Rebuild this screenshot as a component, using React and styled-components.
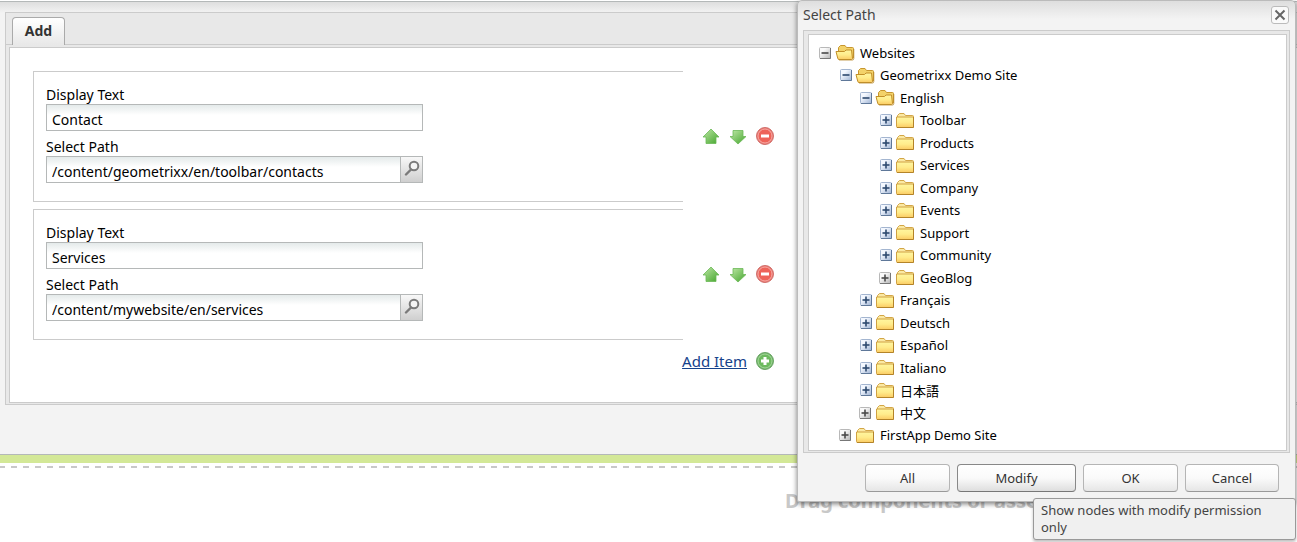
import React, { useState } from "react";
import styled, { createGlobalStyle } from "styled-components";

const GlobalStyle = createGlobalStyle`
    * {
        box-sizing: border-box;
    }

    body {
        margin: 0;
        background: #fff;
        color: #000;
        font-family: "Noto Sans", "Noto Sans CJK JP", sans-serif;
        font-size: 14px;
        overflow: hidden;
    }

    button,
    input {
        font: inherit;
        color: inherit;
    }
`;

const Page = styled.div`
    position: relative;
    min-height: 100vh;
    overflow: hidden;
`;

const EditDialog = styled.section`
    margin-top: 1px;
    padding: 10px 0 49px 5px;
    border-top: 1px solid #b4b8b8;
    border-bottom: 1px solid #b4b8b8;
    background: linear-gradient(#dedede, #f3f3f3 11px);
`;

const TabPanel = styled.div`
    border: 1px solid #cbcbcb;
    border-right: none;
    background: #e8e8e8;
`;

const TabStrip = styled.div`
    display: flex;
    height: 32px;
    padding: 4px 6px 0;
    border-bottom: 1px solid #cbcbcb;
`;

const Tab = styled.button`
    width: 53px;
    height: 28px;
    padding: 0 0 2px;
    border: 1px solid #aaa;
    border-bottom: none;
    border-radius: 4px 4px 0 0;
    background: linear-gradient(#fff, #e8e8e8);
    color: #333;
    font-weight: bold;
`;

const TabBody = styled.div`
    margin: 2px 0 1px 3px;
    padding: 23px 23px 27px;
    border: 1px solid #cbcbcb;
    border-right: none;
    background: #fff;
`;

const MultiField = styled.div`
    display: flex;
    flex-direction: column;
    gap: 7px;
    max-width: 741px;
`;

const ItemRow = styled.div`
    display: flex;
    align-items: center;
    gap: 19px;
`;

const FieldBox = styled.div`
    flex: 1;
    padding: 12px 12px 18px;
    border: 1px solid #cbcbcb;
    border-right: none;
`;

const FormGroup = styled.div`
    max-width: 377px;

    & + & {
        margin-top: 5px;
    }
`;

const Label = styled.label`
    display: block;
    padding-top: 2px;
    line-height: 18px;
`;

const InputWrap = styled.div`
    display: flex;
    height: 27px;
    border: 1px solid #b5b8b8;
    background: linear-gradient(#e4eaea, #fff 10px);
`;

const Input = styled.input`
    flex: 1;
    min-width: 0;
    padding: 4px 5px 0;
    border: none;
    outline: none;
    background: transparent;
`;

const SearchButton = styled.button`
    width: 22px;
    padding: 0 0 4px;
    border: none;
    border-left: 1px solid #b5b8b8;
    background: linear-gradient(#f8f8f8, #cfcfcf);
    line-height: 0;
`;

const Actions = styled.div`
    display: flex;
    align-items: center;
    gap: 9px;
    padding-bottom: 2px;
`;

const IconButton = styled.button`
    width: 18px;
    height: 18px;
    padding: 0;
    border: none;
    background: none;
    line-height: 0;
    cursor: pointer;
`;

const AddRow = styled.div`
    display: flex;
    justify-content: flex-end;
    align-items: center;
    gap: 9px;
    height: 28px;
`;

const AddLink = styled.a`
    color: #15428b;
    font-size: 15px;
`;

const DropZone = styled.div`
    border-top: 8px solid #d3e897;
    padding-top: 3px;
    color: #c8c8c8;
    font-size: 20px;
    font-weight: bold;
    line-height: 28px;

    &::before {
        content: "";
        display: block;
        height: 2px;
        margin-bottom: 19px;
        background: repeating-linear-gradient(90deg, #c8c8c8 0 5px, #fff 5px 11px, #c8c8c8 11px 12px);
    }
`;

const DropText = styled.p`
    margin: 0;
    padding-left: 785px;
    white-space: nowrap;
`;

const PathDialog = styled.section`
    position: absolute;
    top: 0;
    right: 1px;
    width: 499px;
    padding: 0 5px 9px;
    border: 1px solid #bbb;
    border-radius: 5px 5px 2px 2px;
    background: linear-gradient(#dedede, #f3f3f3 18px);
    box-shadow: 0 2px 5px rgba(0, 0, 0, 0.5);
    font-size: 13px;
`;

const DialogHeader = styled.header`
    display: flex;
    align-items: center;
    justify-content: space-between;
    height: 29px;
    padding: 0 1px 2px 0;
`;

const DialogTitle = styled.h2`
    margin: 0;
    color: #444;
    font-size: 14px;
    font-weight: normal;
`;

const CloseButton = styled.button`
    width: 18px;
    height: 18px;
    padding: 0;
    border: 1px solid #bbb;
    border-radius: 3px;
    background: #fafafa;
    line-height: 0;
`;

const TreeFrame = styled.div`
    padding: 3px 2px 1px 4px;
    border: 1px solid #cbcbcb;
    background: #e8e8e8;
`;

const Tree = styled.ul`
    margin: 0;
    padding: 6px 10px 4px;
    border: 1px solid #cbcbcb;
    background: #fff;
    list-style: none;
`;

const TreeRow = styled.li`
    display: flex;
    align-items: center;
    height: 22px;
    padding-left: ${({ $depth }) => $depth * 20}px;
    white-space: nowrap;

    &:nth-child(odd) {
        height: 23px;
    }
`;

const Expander = styled.button`
    display: flex;
    width: 16px;
    padding: 0 0 0 ${({ $blue }) => ($blue ? 1 : 0)}px;
    border: none;
    background: none;
`;

const NodeText = styled.span`
    margin-left: 5px;
`;

const ButtonBar = styled.footer`
    display: flex;
    justify-content: flex-end;
    gap: 7px;
    padding: 11px 11px 0 0;
`;

const Button = styled.button`
    width: ${({ $width }) => $width}px;
    height: 28px;
    padding: 0;
    border: 1px solid ${({ $active }) => ($active ? "#888" : "#b5b5b5")};
    border-bottom-color: ${({ $active }) => ($active ? "#777" : "#999")};
    border-radius: 4px;
    background: linear-gradient(#fff, #fafafa 50%, ${({ $active }) => ($active ? "#dedede" : "#e6e6e6")});
    color: #333;
`;

const Tooltip = styled.div`
    position: absolute;
    right: 1px;
    top: 498px;
    width: 263px;
    padding: 3px 7px;
    border: 1px solid #999;
    border-radius: 3px;
    background: #f0f0f0;
    box-shadow: 0 2px 3px rgba(0, 0, 0, 0.25);
    color: #444;
    font-size: 13px;
    line-height: 17px;
`;

const ITEMS = [
  { id: "contact", text: "Contact", path: "/content/geometrixx/en/toolbar/contacts" },
  { id: "services", text: "Services", path: "/content/mywebsite/en/services" },
];

const NODES = [
  { name: "Websites", depth: 0, open: true, last: true },
  { name: "Geometrixx Demo Site", depth: 1, open: true },
  { name: "English", depth: 2, open: true },
  { name: "Toolbar", depth: 3 },
  { name: "Products", depth: 3 },
  { name: "Services", depth: 3 },
  { name: "Company", depth: 3 },
  { name: "Events", depth: 3 },
  { name: "Support", depth: 3 },
  { name: "Community", depth: 3 },
  { name: "GeoBlog", depth: 3, last: true },
  { name: "Français", depth: 2 },
  { name: "Deutsch", depth: 2 },
  { name: "Español", depth: 2 },
  { name: "Italiano", depth: 2 },
  { name: "日本語", depth: 2 },
  { name: "中文", depth: 2, last: true },
  { name: "FirstApp Demo Site", depth: 1, last: true },
];

const Gradients = () => (
  <svg width="0" height="0" style={{ display: "block" }} aria-hidden="true">
    <defs>
      <linearGradient id="green" x1="0" y1="0" x2="1" y2="1">
        <stop offset="0" stopColor="#c0e8a8" />
        <stop offset="1" stopColor="#43a52c" />
      </linearGradient>
      <linearGradient id="folder" x1="0" y1="0" x2="0" y2="1">
        <stop offset="0" stopColor="#fff6a0" />
        <stop offset="0.5" stopColor="#ffec8c" />
        <stop offset="1" stopColor="#fbcb63" />
      </linearGradient>
      <linearGradient id="boxBlue" x1="0" y1="0" x2="1" y2="1">
        <stop offset="0.3" stopColor="#f4f8ff" />
        <stop offset="1" stopColor="#9fb4d4" />
      </linearGradient>
      <linearGradient id="boxGray" x1="0" y1="0" x2="1" y2="1">
        <stop offset="0.3" stopColor="#fafafa" />
        <stop offset="1" stopColor="#b5b5b5" />
      </linearGradient>
    </defs>
  </svg>
);

const ArrowIcon = ({ down }) => (
  <svg width="18" height="18" viewBox="0 0 18 18">
    <path
      d={down ? "M4 3.5h10v6h3L9 17 1 9.500h3z" : "M9 2l8 8h-3v6.500H4V10H1z"}
      fill="url(#green)"
      stroke="#6bb957"
      strokeWidth="0.8"
    />
  </svg>
);

const RemoveIcon = () => (
  <svg width="18" height="18" viewBox="0 0 18 18">
    <circle cx="9" cy="9" r="8.5" fill="#e8706a" stroke="#cf716d" />
    <circle cx="9" cy="9" r="7" fill="#ee6359" stroke="#f7aaa4" />
    <rect x="5" y="7.5" width="8" height="3" fill="#fff" />
  </svg>
);

const AddIcon = () => (
  <svg width="18" height="18" viewBox="0 0 18 18">
    <circle cx="9" cy="9" r="8.5" fill="#6cb063" stroke="#6ba566" />
    <circle cx="9" cy="9" r="7" fill="#6dba5f" stroke="#a5d79c" />
    <path d="M7.5 5h3v2.5H13v3h-2.5V13h-3v-2.5H5v-3h2.5z" fill="#fff" />
  </svg>
);

const SearchIcon = () => (
  <svg width="16" height="16" viewBox="0 0 16 16" fill="none" stroke="#7a7a7a">
    <circle cx="10" cy="6" r="4.3" strokeWidth="2" fill="#f4f4f4" />
    <path d="M7 9.5L2 14.5" strokeWidth="2.4" strokeLinecap="round" />
  </svg>
);

const CloseIcon = () => (
  <svg width="16" height="16" viewBox="0 0 16 16" stroke="#666" strokeWidth="2">
    <path d="M3.5 3.500l9 9M12.500 3.500l-9 9" />
  </svg>
);

const ExpanderIcon = ({ open, blue }) => (
  <svg width="12" height="12" viewBox="0 0 12 12">
    <rect
      x="0.5"
      y="0.5"
      width="11"
      height="11"
      rx="1"
      fill={blue ? "url(#boxBlue)" : "url(#boxGray)"}
      stroke={blue ? "#a3b5d0" : "#b8b8b8"}
    />
    <path d="M1 11.5h10.500V1" fill="none" stroke={blue ? "#5f7899" : "#777"} />
    <path d="M2.500 5.200h7v1.600h-7z" fill={blue ? "#2d496f" : "#4a4a4a"} />
    {!open && <path d="M5.200 2.500h1.600v7H5.200z" fill={blue ? "#2d496f" : "#4a4a4a"} />}
  </svg>
);

const FolderIcon = ({ open }) => (
  <svg width="20" height="17" viewBox="0 0 20 17" strokeLinejoin="round">
    {open ? (
      <>
        <path d="M3.500 14V3.500l2-2h4.500l1.500 2h6q1 0 1 1V14z" fill="#f3d269" stroke="#c7962f" />
        <path d="M1 7.500h8.500L11 6h5.500l1 8.500q0 1-1 1H4q-1 0-1.200-1z" fill="url(#folder)" stroke="#c28f28" />
        <path d="M4 16h13.500q1.300 0 1.300-1.500V5" fill="none" stroke="#b98a2e" strokeWidth="0.8" />
      </>
    ) : (
      <>
        <path d="M2.500 5V3.500l2-2h4.500l1.500 2h7q1 0 1 1V8h-16z" fill="#fbe9a3" stroke="#d3a647" />
        <path d="M1.500 5h17v9.500q0 1-1 1h-15q-1 0-1-1z" fill="url(#folder)" stroke="#d0a142" />
        <path d="M2 15.500h16.500V5" fill="none" stroke="#b48429" />
      </>
    )}
  </svg>
);

const LinkItem = ({ item }) => (
  <ItemRow>
    <FieldBox>
      <FormGroup>
        <Label htmlFor={`${item.id}-text`}>Display Text</Label>
        <InputWrap>
          <Input id={`${item.id}-text`} type="text" defaultValue={item.text} />
        </InputWrap>
      </FormGroup>
      <FormGroup>
        <Label htmlFor={`${item.id}-path`}>Select Path</Label>
        <InputWrap>
          <Input id={`${item.id}-path`} type="text" defaultValue={item.path} />
          <SearchButton type="button" aria-label="Browse">
            <SearchIcon />
          </SearchButton>
        </InputWrap>
      </FormGroup>
    </FieldBox>
    <Actions>
      <IconButton type="button" aria-label="Move up">
        <ArrowIcon />
      </IconButton>
      <IconButton type="button" aria-label="Move down">
        <ArrowIcon down />
      </IconButton>
      <IconButton type="button" aria-label="Remove">
        <RemoveIcon />
      </IconButton>
    </Actions>
  </ItemRow>
);

const SelectPathDialog = ({ onClose }) => (
  <PathDialog role="dialog" aria-labelledby="path-title">
    <DialogHeader>
      <DialogTitle id="path-title">Select Path</DialogTitle>
      <CloseButton type="button" aria-label="Close" onClick={onClose}>
        <CloseIcon />
      </CloseButton>
    </DialogHeader>
    <TreeFrame>
      <Tree>
        {NODES.map((node, index) => (
          <TreeRow key={index} $depth={node.depth}>
            <Expander type="button" $blue={!node.last} aria-label={node.open ? "Collapse" : "Expand"}>
              <ExpanderIcon open={node.open} blue={!node.last} />
            </Expander>
            <FolderIcon open={node.open} />
            <NodeText>{node.name}</NodeText>
          </TreeRow>
        ))}
      </Tree>
    </TreeFrame>
    <ButtonBar>
      <Button type="button" $width={85}>All</Button>
      <Button type="button" $width={119} $active aria-describedby="modify-tip">Modify</Button>
      <Button type="button" $width={95} onClick={onClose}>OK</Button>
      <Button type="button" $width={94} onClick={onClose}>Cancel</Button>
    </ButtonBar>
  </PathDialog>
);

const App = () => {
  const [pathOpen, setPathOpen] = useState(true);

  return (
    <Page>
      <GlobalStyle />
      <Gradients />
      <EditDialog>
        <TabPanel>
          <TabStrip>
            <Tab type="button">Add</Tab>
          </TabStrip>
          <TabBody>
            <MultiField>
              {ITEMS.map((item) => (
                <LinkItem key={item.id} item={item} />
              ))}
              <AddRow>
                <AddLink href="#add">Add Item</AddLink>
                <IconButton type="button" aria-label="Add item">
                  <AddIcon />
                </IconButton>
              </AddRow>
            </MultiField>
          </TabBody>
        </TabPanel>
      </EditDialog>
      <DropZone>
        <DropText>Drag components or assets here</DropText>
      </DropZone>
      {pathOpen && (
        <>
          <SelectPathDialog onClose={() => setPathOpen(false)} />
          <Tooltip id="modify-tip" role="tooltip">Show nodes with modify permission only</Tooltip>
        </>
      )}
    </Page>
  );
};

export default App;
